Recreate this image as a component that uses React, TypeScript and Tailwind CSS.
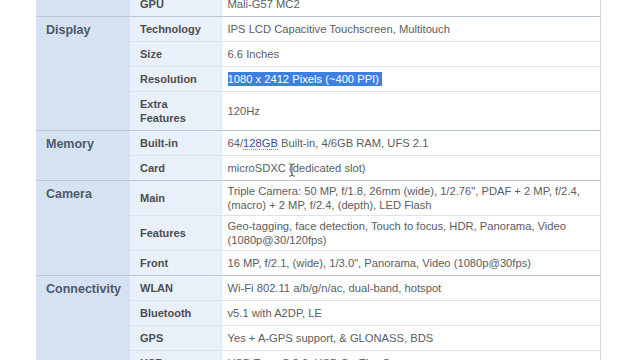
import React from "react";

type Row = { label: string; value: React.ReactNode };
type Section = { name: string; rows: Row[] };

const SECTIONS: Section[] = [
  { name: "", rows: [{ label: "GPU", value: "Mali-G57 MC2" }] },
  {
    name: "Display",
    rows: [
      { label: "Technology", value: "IPS LCD Capacitive Touchscreen, Multitouch" },
      { label: "Size", value: "6.6 Inches" },
      {
        label: "Resolution",
        value: (
          <span className="bg-[#3d7fe3] py-px text-white">1080 x 2412 Pixels (~400 PPI)&nbsp;</span>
        ),
      },
      { label: "Extra Features", value: "120Hz" },
    ],
  },
  {
    name: "Memory",
    rows: [
      {
        label: "Built-in",
        value: (
          <>
            64/
            <span className="border-b border-dotted border-[#7d86b8] text-[#3b4a9e]">128GB</span> Built-in, 4/6GB
            RAM, UFS 2.1
          </>
        ),
      },
      {
        label: "Card",
        value: (
          <span className="relative">
            microSDXC (dedicated slot)
            {/* text cursor left over in the screenshot */}
            <svg className="absolute left-[60px] top-[1px]" width="8" height="14" viewBox="0 0 8 14">
              <path d="M1 1h2l1 1 1-1h2M4 2v10M1 13h2l1-1 1 1h2" fill="none" stroke="#555" strokeWidth="1" />
            </svg>
          </span>
        ),
      },
    ],
  },
  {
    name: "Camera",
    rows: [
      {
        label: "Main",
        value:
          'Triple Camera: 50 MP, f/1.8, 26mm (wide), 1/2.76", PDAF + 2 MP, f/2.4, (macro) + 2 MP, f/2.4, (depth), LED Flash',
      },
      {
        label: "Features",
        value: "Geo-tagging, face detection, Touch to focus, HDR, Panorama, Video (1080p@30/120fps)",
      },
      { label: "Front", value: '16 MP, f/2.1, (wide), 1/3.0", Panorama, Video (1080p@30fps)' },
    ],
  },
  {
    name: "Connectivity",
    rows: [
      { label: "WLAN", value: "Wi-Fi 802.11 a/b/g/n/ac, dual-band, hotspot" },
      { label: "Bluetooth", value: "v5.1 with A2DP, LE" },
      { label: "GPS", value: "Yes + A-GPS support, & GLONASS, BDS" },
      { label: "USB", value: "USB Type-C 2.0, USB On-The-Go" },
    ],
  },
];

export default function App() {
  return (
    <div className="h-[360px] w-[640px] overflow-hidden bg-white font-['Liberation_Sans',Arial,sans-serif]">
      <table className="-mt-[8px] ml-[36px] w-[565px] table-fixed border-collapse">
        <colgroup>
          <col className="w-[94px]" />
          <col className="w-[91px]" />
          <col />
        </colgroup>
        <tbody>
          {SECTIONS.map((sec) =>
            sec.rows.map((row, i) => {
              const last = i === sec.rows.length - 1;
              const line = last ? "border-b-[#b9c6d8]" : "border-b-[#dde3ec]";
              return (
                <tr key={sec.name + row.label}>
                  {i === 0 && (
                    <td
                      rowSpan={sec.rows.length}
                      className="border-b border-b-[#b9c6d8] bg-[#d5e2f4] px-[10px] pt-[6px] align-top text-[12.5px] font-bold leading-[14px] text-[#4f5968]"
                    >
                      {sec.name}
                    </td>
                  )}
                  <td
                    className={`border-b border-r border-r-[#dfe6f0] bg-[#eaf0f9] py-[5px] pl-[10px] pr-[12px] align-middle text-[11px] font-bold leading-[14px] text-[#4a4d52] ${line}`}
                  >
                    {row.label}
                  </td>
                  <td
                    className={`border-b border-r border-r-[#d3d7dd] bg-white px-[6px] py-[3px] align-middle text-[11.2px] leading-[14px] text-[#5a5d62] ${line}`}
                  >
                    {row.value}
                  </td>
                </tr>
              );
            })
          )}
        </tbody>
      </table>
    </div>
  );
}
